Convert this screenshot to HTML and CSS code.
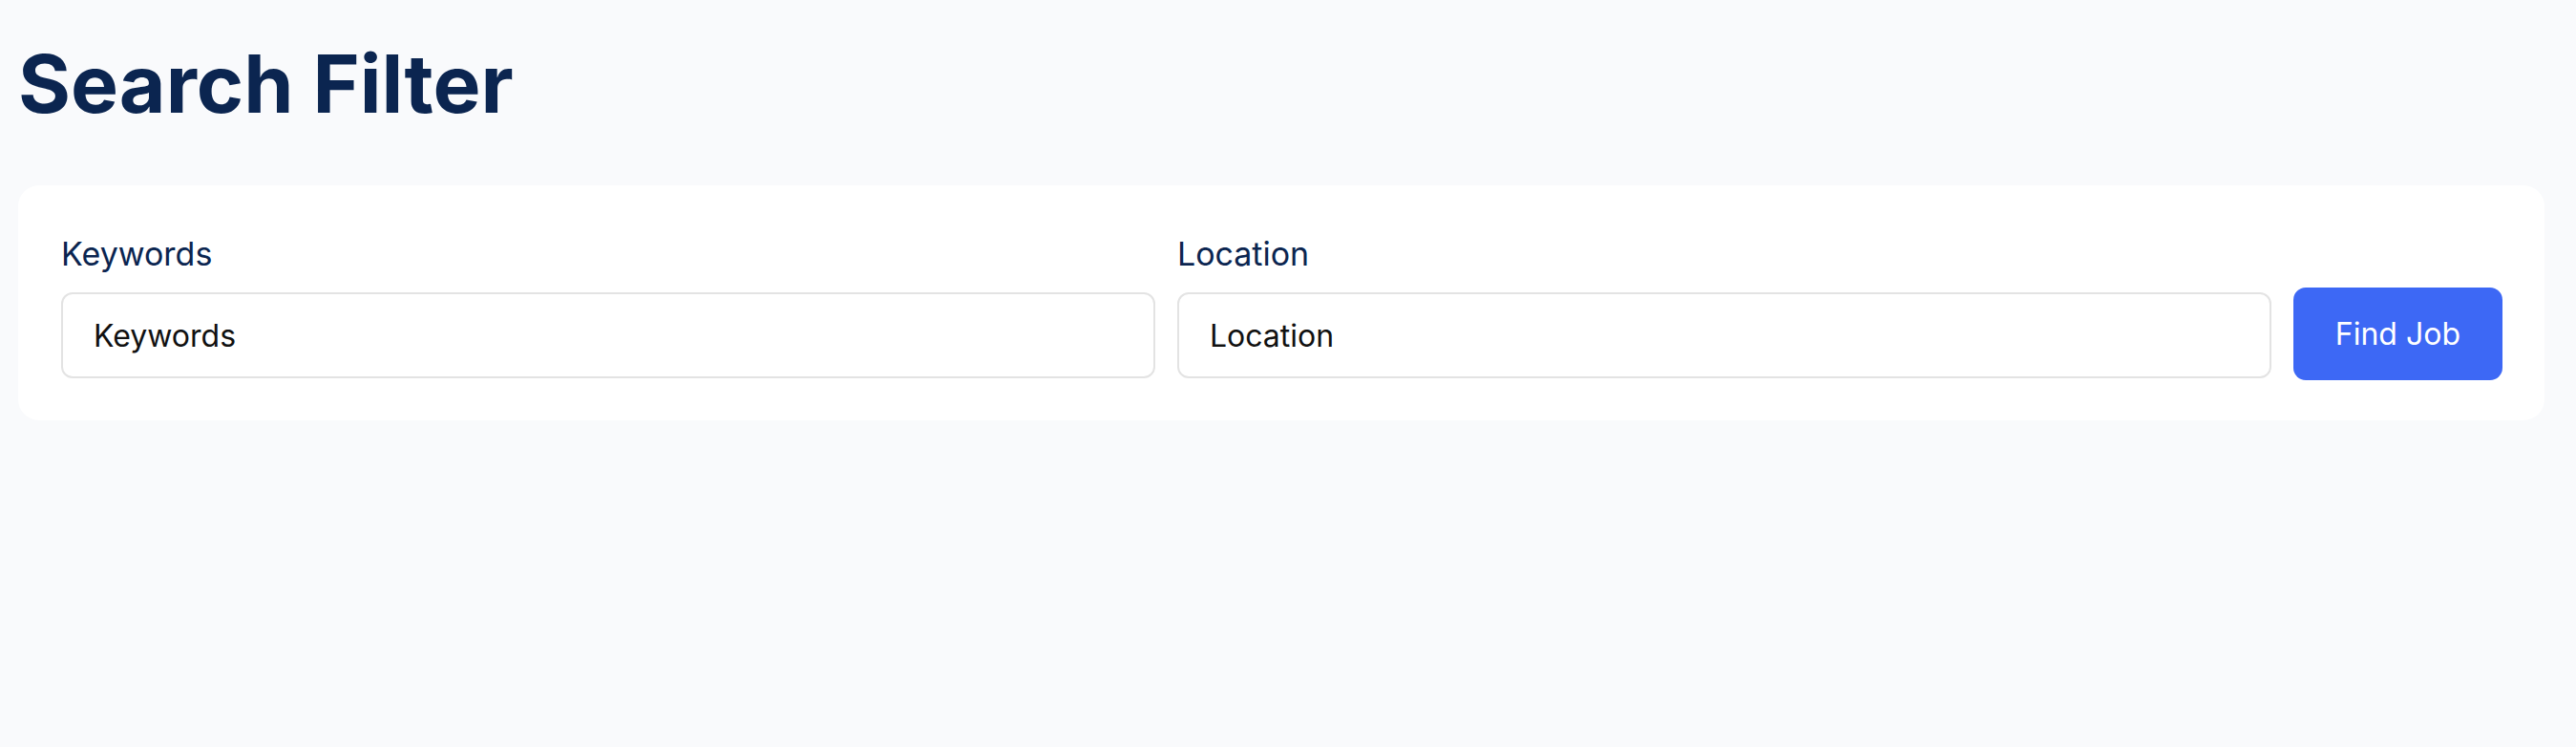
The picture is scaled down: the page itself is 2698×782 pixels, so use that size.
FILE: index.html
```html
<!DOCTYPE html>
<html lang="en">
<head>
    <meta charset="UTF-8">
    <meta name="viewport" content="width=device-width, initial-scale=1.0">
    <title>Search Filter</title>
    <link rel="stylesheet" href="styles.css">
</head>
<body>
    <h1 class="page-title">Search Filter</h1>
    <form class="filter-card">
        <div class="field">
            <label for="keywords">Keywords</label>
            <input type="text" id="keywords" placeholder="Keywords">
        </div>
        <div class="field">
            <label for="location">Location</label>
            <input type="text" id="location" placeholder="Location">
        </div>
        <button type="submit" class="find-btn">Find Job</button>
    </form>
</body>
</html>
```

FILE: styles.css
```css
body {
    margin: 0;
    padding: 37px 33px 0 19px;
    background-color: #f9fafc;
    font-family: Inter, "DM Sans", "Noto Sans", sans-serif;
    min-height: 100vh;
    box-sizing: border-box;
}
.page-title {
    margin: 0 0 55px 0;
    font-size: 84px;
    line-height: 102px;
    font-weight: 700;
    color: #0b2550;
}
.filter-card {
    display: flex;
    align-items: flex-end;
    gap: 23px;
    background-color: #ffffff;
    border-radius: 22px;
    padding: 50px 44px 44px 45px;
}
.field {
    flex: 1;
    display: flex;
    flex-direction: column;
    gap: 18px;
}
.field label {
    font-size: 34px;
    line-height: 44px;
    color: #0b2550;
}
.field input {
    height: 90px;
    box-sizing: border-box;
    border: 2px solid #e3e3e3;
    border-radius: 12px;
    padding: 0 32px;
    font-family: inherit;
    font-size: 32px;
    color: #111111;
    outline: none;
}
.field input::placeholder {
    color: #111111;
    opacity: 1;
}
.find-btn {
    height: 97px;
    margin-bottom: -2px;
    padding: 0 44px;
    border: none;
    border-radius: 13px;
    background-color: #3d68f5;
    color: #ffffff;
    font-family: inherit;
    font-size: 32px;
    cursor: pointer;
}
```
